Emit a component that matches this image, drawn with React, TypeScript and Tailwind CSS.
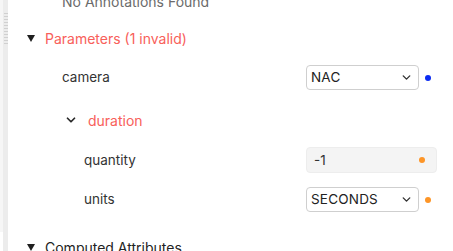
import { ChevronDown } from 'lucide-react';

const RED = 'text-[#f8605a]';

function Caret() {
  return (
    <svg width="8" height="7" viewBox="0 0 8 7" className="shrink-0">
      <path d="M0 0 H8 L4 7 Z" fill="#1f1f1f" />
    </svg>
  );
}

function Dot({ color }: { color: string }) {
  return <span className={`block w-[6px] h-[6px] rounded-full ${color}`} />;
}

function FakeSelect({ value }: { value: string }) {
  return (
    <div className="w-[113px] h-[25px] border border-[#cfcfcf] rounded-[4px] bg-white flex items-center justify-between pl-[4px] pr-[5px] text-[13.5px] text-[#222]">
      <span className="tracking-[0.2px]">{value}</span>
      <ChevronDown className="w-[13px] h-[13px] text-[#333]" strokeWidth={2.6} />
    </div>
  );
}

export default function App() {
  return (
    <div
      className="w-[453px] h-[251px] overflow-hidden flex bg-white"
      style={{ fontFamily: 'Inter, "Noto Sans", sans-serif' }}
    >
      {/* Left rail */}
      <div className="w-[8px] shrink-0 flex">
        <div className="w-[3px] flex flex-col">
          <div className="h-[232px] shrink-0 bg-[#f6f6f6]" />
          <div className="flex-1 bg-white" />
        </div>
        <div className="w-[5px] bg-[#ececec] pt-[12px] pl-[1px]">
          <div
            className="w-[4px] h-[33px]"
            style={{
              backgroundImage: 'radial-gradient(circle, #d0d0d0 0.8px, transparent 1px)',
              backgroundSize: '2px 3px',
            }}
          />
        </div>
      </div>

      {/* Content */}
      <div className="flex-1 flex flex-col text-[13.5px] text-[#333] [&>*]:shrink-0">
        <div className="-mt-[8px] h-[20px] leading-[20px] pl-[54px] text-[#6b6b6b] text-[14px]">
          No Annotations Found
        </div>

        <div className={`mt-[14px] h-[24px] flex items-center pl-[19px] gap-[10px] ${RED} text-[14px]`}>
          <Caret />
          <span>Parameters (1 invalid)</span>
        </div>

        <div className="mt-[15px] h-[25px] flex items-center">
          <span className="w-[298px] pl-[54px]">camera</span>
          <FakeSelect value="NAC" />
          <span className="ml-[6px]"><Dot color="bg-[#0b2cf2]" /></span>
        </div>

        <div className={`mt-[18px] h-[24px] flex items-center pl-[56px] gap-[10px] ${RED} text-[14px]`}>
          <ChevronDown className="w-[14px] h-[14px] text-[#2a2a2a]" strokeWidth={3} />
          <span>duration</span>
        </div>

        <div className="mt-[15px] h-[26px] flex items-center">
          <span className="w-[298px] pl-[76px]">quantity</span>
          <div className="w-[131px] h-[26px] rounded-[4px] bg-[#f4f4f4] border border-[#ededed] flex items-center justify-between pl-[7px] pr-[11px] text-[#333]">
            <span>-1</span>
            <Dot color="bg-[#fd9527]" />
          </div>
        </div>

        <div className="mt-[14px] h-[25px] flex items-center">
          <span className="w-[298px] pl-[76px]">units</span>
          <FakeSelect value="SECONDS" />
          <span className="ml-[6px]"><Dot color="bg-[#fd9527]" /></span>
        </div>

        <div className="mt-[23px] h-[24px] flex items-center pl-[19px] gap-[10px] text-[14px] text-[#222]">
          <Caret />
          <span>Computed Attributes</span>
        </div>
      </div>
    </div>
  );
}
